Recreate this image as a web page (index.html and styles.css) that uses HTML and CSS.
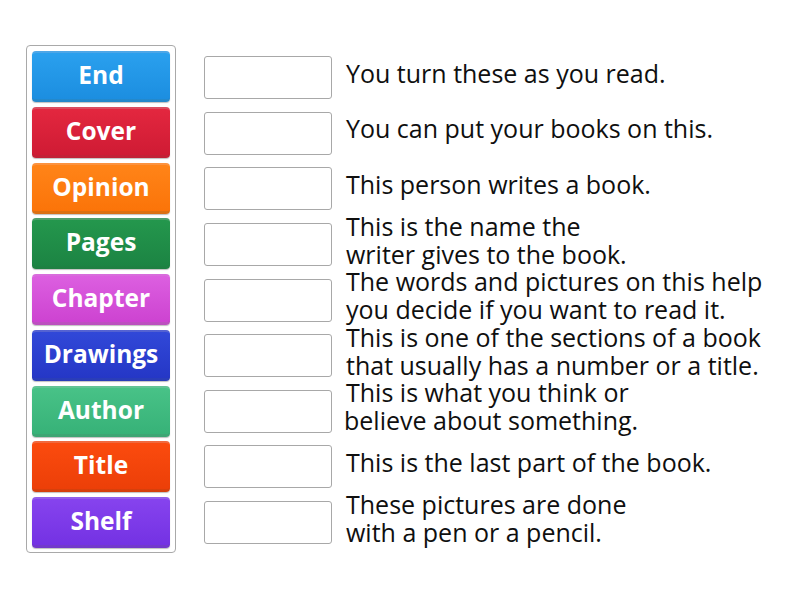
FILE: index.html
```html
<!DOCTYPE html>
<html>
<head>
<meta charset="utf-8">
<link rel="stylesheet" href="styles.css">
</head>
<body>
<div class="game">
  <div class="bank">
    <div class="tile c-end">End</div>
    <div class="tile c-cover">Cover</div>
    <div class="tile c-opinion">Opinion</div>
    <div class="tile c-pages">Pages</div>
    <div class="tile c-chapter">Chapter</div>
    <div class="tile c-drawings">Drawings</div>
    <div class="tile c-author">Author</div>
    <div class="tile c-title">Title</div>
    <div class="tile c-shelf">Shelf</div>
  </div>
  <div class="targets">
    <div class="row"><div class="slot"></div><div class="clue">You turn these as you read.</div></div>
    <div class="row"><div class="slot"></div><div class="clue">You can put your books on this.</div></div>
    <div class="row"><div class="slot"></div><div class="clue">This person writes a book.</div></div>
    <div class="row"><div class="slot"></div><div class="clue">This is the name the<br>writer gives to the book.</div></div>
    <div class="row"><div class="slot"></div><div class="clue">The words and pictures on this help<br>you decide if you want to read it.</div></div>
    <div class="row"><div class="slot"></div><div class="clue">This is one of the sections of a book<br>that usually has a number or a title.</div></div>
    <div class="row"><div class="slot"></div><div class="clue">This is what you think or<br><span class="lead">believe about something.</span></div></div>
    <div class="row"><div class="slot"></div><div class="clue">This is the last part of the book.</div></div>
    <div class="row"><div class="slot"></div><div class="clue">These pictures are done<br>with a pen or a pencil.</div></div>
  </div>
</div>
</body>
</html>
```
FILE: styles.css
```css
html, body {
  margin: 0;
  padding: 0;
  background: #ffffff;
}
body {
  font-family: "Open Sans", "Liberation Sans", sans-serif;
  color: #111;
}
.game {
  display: flex;
  align-items: flex-start;
  padding: 45px 0 0 26px;
}
.bank {
  width: 138px;
  padding: 5px 5px 4px 5px;
  border: 1px solid #a9a9a9;
  border-radius: 4px;
  display: flex;
  flex-direction: column;
  gap: 4.75px;
}
.tile {
  height: 51px;
  box-sizing: border-box;
  border-radius: 4px;
  color: #fff;
  font-weight: 700;
  font-size: 24.5px;
  line-height: 43px;
  text-align: center;
  border-top: 2px solid rgba(255,255,255,0.22);
  border-bottom: 3px solid rgba(0,0,0,0.14);
  box-shadow: 0 1px 1px rgba(0,0,0,0.25);
}
.c-end { background: linear-gradient(#2aa0ee, #1c8ee0); }
.c-cover { background: linear-gradient(#e3273f, #cf1b34); }
.c-opinion { background: linear-gradient(#ff8418, #fb7409); }
.c-pages { background: linear-gradient(#24974d, #1c8443); }
.c-chapter { background: linear-gradient(#dc5fe0, #cd43d1); }
.c-drawings { background: linear-gradient(#3148d8, #2537c6); }
.c-author { background: linear-gradient(#48c287, #37b278); }
.c-title { background: linear-gradient(#fb4b0e, #ec3f08); }
.c-shelf { background: linear-gradient(#8643ee, #7432e3); }
.targets {
  margin-left: 28px;
  padding-top: 5px;
  display: flex;
  flex-direction: column;
}
.row {
  height: 55.6px;
  display: flex;
  align-items: center;
}
.slot {
  width: 128px;
  height: 43px;
  box-sizing: border-box;
  border: 1px solid #a8a8a8;
  border-radius: 3px;
  background: #fff;
  flex: none;
}
.clue {
  margin-left: 14px;
  font-size: 25px;
  line-height: 28px;
  margin-top: -10px;
  white-space: nowrap;
  color: #0f0f0f;
}
.lead {
  margin-left: -2px;
}
```
